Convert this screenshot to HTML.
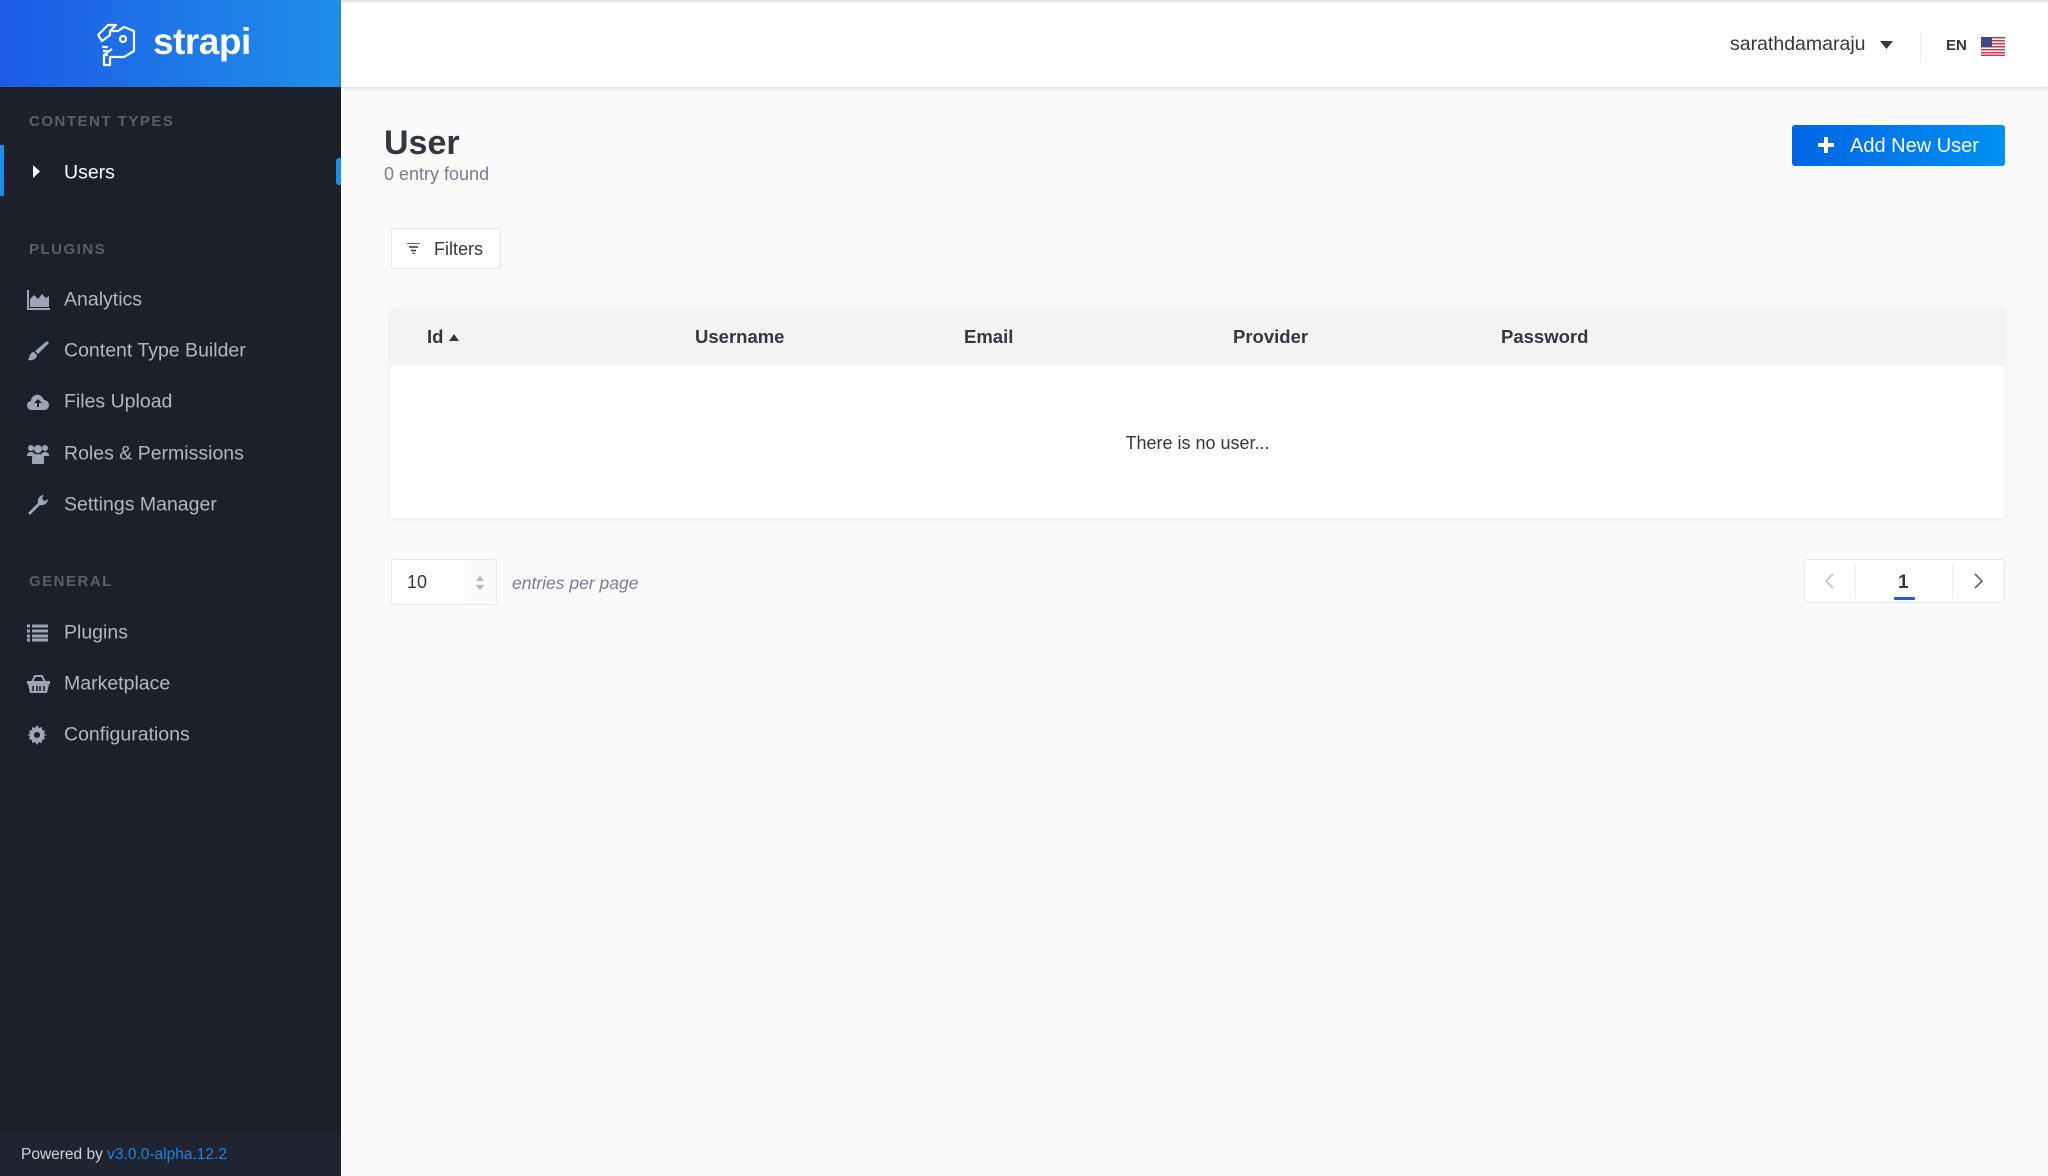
<!DOCTYPE html>
<html><head><meta charset="utf-8"><style>
*{box-sizing:border-box;margin:0;padding:0}
body{width:2048px;height:1176px;overflow:hidden;background:#fafafb;font-family:"Liberation Sans",sans-serif;position:relative}
.sb{position:absolute;left:0;top:0;width:341px;height:1176px;background:#1c202b}
.logo{position:absolute;left:0;top:0;width:341px;height:87px;background:linear-gradient(90deg,#1c5ce6,#1f8fe9)}
.logo span{position:absolute;left:153px;top:21px;color:#fff;font-weight:bold;font-size:37px;letter-spacing:-0.5px}
.sec{position:absolute;left:29px;color:#5b5f69;font-weight:bold;font-size:15px;letter-spacing:1.5px}
.it{position:absolute;left:64px;color:#b4b7bf;font-size:19.5px;transform:translateY(-50%)}
.ic{position:absolute;left:27px;transform:translateY(-50%)}
.foot{position:absolute;left:0;top:1133px;width:341px;height:43px;background:#1f2430;color:#d0d2d6;font-size:15.5px;padding:13px 0 0 21px}
.foot b{font-weight:normal;color:#1c86e2}
.hd{position:absolute;left:341px;top:0;right:0;height:87px;background:#fff;border-top:2px solid #e3e4e6;box-shadow:0 1px 4px rgba(0,0,0,.12)}
.th{position:absolute;top:326px;font-weight:bold;font-size:18.5px;color:#333740}
</style></head><body>
<div class="sb">
 <div class="logo">
  <svg style="position:absolute;left:94px;top:21px" width="44" height="46" viewBox="0 0 44 46" fill="none" stroke="#fff" stroke-width="2.2" stroke-linejoin="round">
   <path d="M4 14 L14 4 L22 4 L16 10 L24 10 L30 6 L40 10 L40 30 L30 36 L16 36 L16 44 L10 44 L10 34 L18 28"/>
   <path d="M4 14 L8 20 L16 14 L16 10"/>
   <circle cx="29" cy="18" r="3"/>
   <path d="M8 26 L14 26 M9 30 L14 30 M10 34 L14 34"/>
  </svg>
  <span>strapi</span>
 </div>
 <div class="sec" style="top:113px">CONTENT TYPES</div>
 <div style="position:absolute;left:0;top:145px;width:4px;height:51px;background:#1c8de8"></div>
 <div style="position:absolute;left:336px;top:158px;width:5px;height:27px;background:#1c8de8;border-radius:3px 0 0 3px"></div>
 <svg style="position:absolute;left:33px;top:165px" width="8" height="13"><path d="M0 0L7 6.5L0 13Z" fill="#fff"/></svg>
 <div class="it" style="top:173px;color:#fff">Users</div>
 <div class="sec" style="top:241px">PLUGINS</div>
 <svg class="ic" style="top:300px" width="23" height="20" viewBox="0 0 23 20"><path d="M1 0V19H23" stroke="#9ea5b5" stroke-width="2" fill="none"/><path d="M3 17V9L7 5L11 9L15 4L19 8L22 6V17Z" fill="#9ea5b5"/></svg>
 <div class="it" style="top:300px">Analytics</div>
 <svg class="ic" style="top:351px" width="22" height="22" viewBox="0 0 22 22"><path d="M20 1L22 3L11 14L8 11Z" fill="#9ea5b5"/><path d="M7 12C3 12 3 16 1 20C5 21 10 19 10 15Z" fill="#9ea5b5"/></svg>
 <div class="it" style="top:351px">Content Type Builder</div>
 <svg class="ic" style="top:402px" width="22" height="18" viewBox="0 0 22 18"><path d="M5 17C1 17 0 14 0 12C0 9 3 8 4 8C4 4 8 1 12 2C15 3 16 5 17 7C20 7 22 10 22 12C22 15 20 17 17 17Z" fill="#9ea5b5"/><path d="M11 6L7 10H10V14H12V10H15Z" fill="#1c202b"/></svg>
 <div class="it" style="top:402px">Files Upload</div>
 <svg class="ic" style="top:454px" width="22" height="20" viewBox="0 0 22 20"><circle cx="4" cy="4" r="3" fill="#9ea5b5"/><circle cx="18" cy="4" r="3" fill="#9ea5b5"/><circle cx="11" cy="5" r="4" fill="#9ea5b5"/><path d="M0 12Q0 8 4 8Q8 8 8 12ZM14 12Q14 8 18 8Q22 8 22 12ZM5 20V14Q5 10 11 10Q17 10 17 14V20Z" fill="#9ea5b5"/></svg>
 <div class="it" style="top:454px">Roles &amp; Permissions</div>
 <svg class="ic" style="top:505px" width="22" height="22" viewBox="0 0 22 22"><path d="M3 21L1 19L11 9C10 5 13 1 17 1L15 4L16 6L18 7L21 5C21 9 17 12 13 11Z" fill="#9ea5b5"/></svg>
 <div class="it" style="top:505px">Settings Manager</div>
 <div class="sec" style="top:573px">GENERAL</div>
 <svg class="ic" style="top:633px" width="21" height="17" viewBox="0 0 21 17" fill="#9ea5b5"><rect x="0" y="0" width="3" height="3"/><rect x="5" y="0" width="16" height="3"/><rect x="0" y="5" width="3" height="3"/><rect x="5" y="5" width="16" height="3"/><rect x="0" y="10" width="3" height="3"/><rect x="5" y="10" width="16" height="3"/><rect x="0" y="14" width="3" height="3"/><rect x="5" y="14" width="16" height="3"/></svg>
 <div class="it" style="top:633px">Plugins</div>
 <svg class="ic" style="top:684px" width="23" height="20" viewBox="0 0 23 20"><path d="M5 8L8 2H15L18 8" stroke="#9ea5b5" stroke-width="2" fill="none"/><path d="M0 7H23V10H22L20 19H3L1 10H0Z" fill="#9ea5b5"/><path d="M6 12V17M10 12V17M13 12V17M17 12V17" stroke="#1c202b" stroke-width="1.6"/></svg>
 <div class="it" style="top:684px">Marketplace</div>
 <svg class="ic" style="top:735px" width="20" height="20" viewBox="0 0 20 20"><path d="M10 0L12 3L15 2L15 5L18 6L17 9L20 10L17 11L18 14L15 15L15 18L12 17L10 20L8 17L5 18L5 15L2 14L3 11L0 10L3 9L2 6L5 5L5 2L8 3Z" fill="#9ea5b5"/><circle cx="10" cy="10" r="3" fill="#1c202b"/></svg>
 <div class="it" style="top:735px">Configurations</div>
 <div class="foot">Powered by <b>v3.0.0-alpha.12.2</b></div>
</div>
<div class="hd">
 <div style="position:absolute;left:1389px;top:31px;font-size:19.5px;color:#333740">sarathdamaraju</div>
 <svg style="position:absolute;left:1539px;top:39px" width="13" height="8"><path d="M0 0H13L6.5 8Z" fill="#333740"/></svg>
 <div style="position:absolute;left:1579px;top:28px;width:1px;height:32px;background:#eee"></div>
 <div style="position:absolute;left:1605px;top:35px;font-size:15px;color:#333740;font-weight:bold">EN</div>
 <svg style="position:absolute;left:1640px;top:35px" width="24" height="19" viewBox="0 0 24 19"><rect width="24" height="19" fill="#fff"/><g fill="#c9374a"><rect y="0" width="24" height="1.5"/><rect y="3" width="24" height="1.5"/><rect y="6" width="24" height="1.5"/><rect y="9" width="24" height="1.5"/><rect y="12" width="24" height="1.5"/><rect y="15" width="24" height="1.5"/><rect y="17.5" width="24" height="1.5"/></g><rect width="11" height="10" fill="#3b4a8a"/></svg>
</div>
<div style="position:absolute;left:384px;top:124px;font-size:34px;font-weight:bold;color:#333740">User</div>
<div style="position:absolute;left:384px;top:164px;font-size:18px;color:#787e8f">0 entry found</div>
<div style="position:absolute;left:1792px;top:125px;width:213px;height:41px;background:linear-gradient(90deg,#0065e4,#0090f2);border-radius:3px;color:#fff;font-size:20px;padding:10px 0 0 58px">Add New User</div>
<svg style="position:absolute;left:1818px;top:137px" width="16" height="16"><path d="M6 0H10V6H16V10H10V16H6V10H0V6H6Z" fill="#fff"/></svg>
<div style="position:absolute;left:391px;top:228px;width:110px;height:41px;background:#fff;border:1px solid #e3e9f3;border-radius:2px;font-size:18px;color:#333740;padding:10px 0 0 42px">Filters</div>
<svg style="position:absolute;left:407px;top:243px" width="13" height="11"><path d="M0 0H13M2 4H11M4 7.5H9M5.5 10.5H7.5" stroke="#333740" stroke-width="1.6"/></svg>
<div style="position:absolute;left:390px;top:307px;width:1615px;height:211px;background:#fff;border-radius:3px;box-shadow:0 2px 4px rgba(0,0,0,.06);overflow:hidden">
 <div style="height:59px;background:#f3f3f4"></div>
</div>
<div class="th" style="left:427px">Id</div>
<svg style="position:absolute;left:449px;top:334px" width="10" height="7"><path d="M0 7H10L5 0Z" fill="#333740"/></svg>
<div class="th" style="left:695px">Username</div>
<div class="th" style="left:964px">Email</div>
<div class="th" style="left:1233px">Provider</div>
<div class="th" style="left:1501px">Password</div>
<div style="position:absolute;left:390px;top:433px;width:1615px;text-align:center;font-size:18px;color:#333740">There is no user...</div>
<div style="position:absolute;left:391px;top:559px;width:106px;height:46px;background:#fff;border:1px solid #e3e9f3;border-radius:3px;font-size:18px;color:#333740;padding:12px 0 0 15px">10</div>
<div style="position:absolute;left:465px;top:560px;width:31px;height:44px;background:#fafafb"></div>
<svg style="position:absolute;left:476px;top:576px" width="8" height="14"><path d="M0 5L4 0L8 5ZM0 9L4 14L8 9Z" fill="#b3b5b9"/></svg>
<div style="position:absolute;left:512px;top:573px;font-size:17.5px;font-style:italic;color:#787e8f">entries per page</div>
<div style="position:absolute;left:1804px;top:559px;width:201px;height:44px;background:#fff;border:1px solid #e3e9f3;border-radius:3px"></div>
<div style="position:absolute;left:1855px;top:564px;width:1px;height:34px;background:#eee"></div>
<div style="position:absolute;left:1952px;top:564px;width:1px;height:34px;background:#eee"></div>
<svg style="position:absolute;left:1825px;top:573px" width="9" height="16"><path d="M8 1L1 8L8 15" stroke="#c4c6cb" stroke-width="1.6" fill="none"/></svg>
<svg style="position:absolute;left:1974px;top:573px" width="9" height="16"><path d="M1 1L8 8L1 15" stroke="#666" stroke-width="1.6" fill="none"/></svg>
<div style="position:absolute;left:1898px;top:572px;font-size:19px;font-weight:bold;color:#333740">1</div>
<div style="position:absolute;left:1894px;top:597px;width:21px;height:3px;background:#1c5de7;border-radius:1px"></div>
</body></html>
